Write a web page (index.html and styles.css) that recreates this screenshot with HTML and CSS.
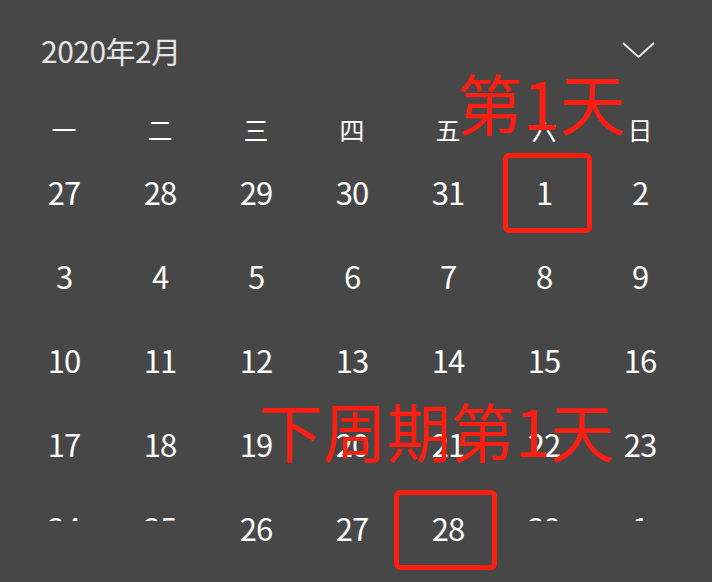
FILE: index.html
```html
<!DOCTYPE html>
<html lang="zh-CN">
<head>
<meta charset="utf-8">
<title>日历</title>
<link rel="stylesheet" href="styles.css">
</head>
<body>
<div class="calendar">
  <div class="header">
    <span class="title">2020年2月</span>
    <svg class="chevron" width="36" height="20" viewBox="0 0 36 20"><polyline points="2,3 17.5,17 33,3" fill="none" stroke="#e6e6e6" stroke-width="2"/></svg>
  </div>
  <div class="weekdays">
    <span>一</span><span>二</span><span>三</span><span>四</span><span>五</span><span>六</span><span>日</span>
  </div>
  <div class="days">
    <div class="day">27</div><div class="day">28</div><div class="day">29</div><div class="day">30</div><div class="day">31</div><div class="day mark mark-a">1</div><div class="day">2</div>
    <div class="day">3</div><div class="day">4</div><div class="day">5</div><div class="day">6</div><div class="day">7</div><div class="day">8</div><div class="day">9</div>
    <div class="day">10</div><div class="day">11</div><div class="day">12</div><div class="day">13</div><div class="day">14</div><div class="day">15</div><div class="day">16</div>
    <div class="day">17</div><div class="day">18</div><div class="day">19</div><div class="day">20</div><div class="day">21</div><div class="day">22</div><div class="day">23</div>
    <div class="day cut">24</div><div class="day cut">25</div><div class="day">26</div><div class="day">27</div><div class="day mark mark-b">28</div><div class="day cut">29</div><div class="day cut">1</div>
  </div>
  <div class="note note-a">第1天</div>
  <div class="note note-b">下周期第1天</div>
</div>
</body>
</html>
```
FILE: styles.css
```css
html, body {
  margin: 0;
  padding: 0;
  background: #474747;
}
.calendar {
  position: relative;
  width: 712px;
  height: 582px;
  overflow: hidden;
  background: #474747;
  font-family: "Noto Sans CJK SC", "Noto Sans", sans-serif;
  color: #ffffff;
}
.header {
  height: 102px;
  display: flex;
  align-items: center;
  justify-content: space-between;
  padding: 0 55px 0 41px;
  box-sizing: border-box;
}
.title {
  font-size: 30px;
  color: #e4e4e4;
  letter-spacing: -0.5px;
  margin-top: -3px;
}
.chevron {
  display: block;
  margin-top: -2px;
}
.weekdays {
  display: grid;
  grid-template-columns: repeat(7, 96px);
  padding: 4px 16px 0;
  height: 49px;
  align-items: center;
  font-size: 25px;
  line-height: 30px;
  text-align: center;
  box-sizing: border-box;
}
.days {
  display: grid;
  grid-template-columns: repeat(7, 96px);
  grid-auto-rows: 84px;
  padding: 0 16px;
}
.day {
  position: relative;
  height: 84px;
  line-height: 82px;
  text-align: center;
  font-size: 31px;
  letter-spacing: -1px;
}
.day.cut {
  height: 34px;
  overflow: hidden;
}
.mark::after {
  content: "";
  position: absolute;
  border: 5px solid #ff1e12;
  border-radius: 6px;
  box-sizing: border-box;
}
.mark-a::after {
  left: 7px;
  top: 2px;
  width: 89px;
  height: 80px;
}
.mark-b::after {
  left: -6px;
  top: 3px;
  width: 103px;
  height: 80px;
}
.note {
  position: absolute;
  color: #ff1e12;
  white-space: nowrap;
  line-height: 1;
}
.note-a {
  left: 457px;
  top: 68px;
  font-size: 66px;
}
.note-b {
  left: 259px;
  top: 397px;
  font-size: 64px;
}
```
